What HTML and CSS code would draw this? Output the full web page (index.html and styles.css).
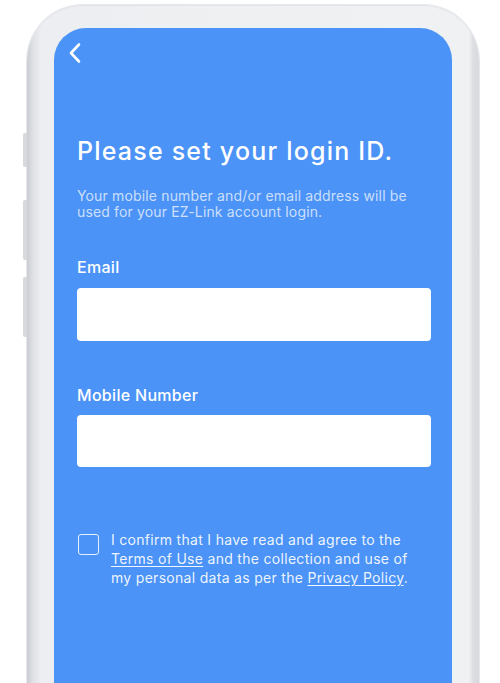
FILE: index.html
```html
<!DOCTYPE html>
<html lang="en">
<head>
<meta charset="utf-8">
<title>Set login ID</title>
<link rel="stylesheet" href="styles.css">
</head>
<body>
<div class="stage">
  <div class="phone">
    <span class="side-btn side-btn-1"></span>
    <span class="side-btn side-btn-2"></span>
    <span class="side-btn side-btn-3"></span>
    <div class="screen">
      <div class="topbar">
        <svg class="back" width="14" height="22" viewBox="0 0 14 22" aria-label="Back">
          <path d="M11 2.5 L3 11 L11 19.5" fill="none" stroke="#fff" stroke-width="2.6" stroke-linecap="round" stroke-linejoin="round"/>
        </svg>
      </div>
      <h1 class="title">Please set your login ID.</h1>
      <p class="subtitle">Your mobile number and/or email address will be used for your EZ-Link account login.</p>
      <div class="field">
        <label class="label">Email</label>
        <div class="input"></div>
      </div>
      <div class="field field-mobile">
        <label class="label">Mobile Number</label>
        <div class="input"></div>
      </div>
      <div class="consent">
        <span class="checkbox"></span>
        <p class="consent-text">I confirm that I have read and agree to the <span class="link">Terms of Use</span> and the collection and use of my personal data as per the <span class="link">Privacy Policy</span>.</p>
      </div>
    </div>
  </div>
</div>
</body>
</html>
```
FILE: styles.css
```css
html, body {
  margin: 0;
  padding: 0;
  background: #ffffff;
  height: 100%;
  overflow: hidden;
}
body {
  font-family: "Inter", "Liberation Sans", sans-serif;
}
.stage {
  padding: 5px 0 0 27px;
}
.phone {
  position: relative;
  width: 452px;
  height: 760px;
  box-sizing: border-box;
  padding: 23px 27px 0 27px;
  border-radius: 56px 56px 0 0;
  background: linear-gradient(to right, #c9ccd2 0px, #dfe1e5 6px, #eceef1 14px, #eef0f2 50%, #f0f1f3 calc(100% - 10px), #dcdee1 calc(100% - 6px), #d8dadd 100%);
  box-shadow: inset 0 1px 0 #e2e4e7, 0 0 0 1px #e6e8eb;
}
.side-btn {
  position: absolute;
  left: -4px;
  width: 4px;
  background: #d7d9dd;
  border-radius: 2px 0 0 2px;
}
.side-btn-1 { top: 128px; height: 34px; }
.side-btn-2 { top: 195px; height: 60px; }
.side-btn-3 { top: 272px; height: 60px; }
.screen {
  height: 100%;
  box-sizing: border-box;
  background: #4b93f6;
  border-radius: 32px 32px 0 0;
  padding: 0 21px 0 23px;
  color: #ffffff;
}
.topbar {
  display: flex;
  padding-top: 14px;
  margin-left: -9px;
  height: 22px;
}
.back {
  display: block;
}
.title {
  margin: 72px 0 0 0;
  font-size: 25px;
  line-height: 30px;
  font-weight: 500;
  letter-spacing: 1.2px;
  white-space: nowrap;
}
.subtitle {
  margin: 22px 0 0 0;
  width: 340px;
  font-size: 14px;
  line-height: 16px;
  letter-spacing: 0.15px;
  color: rgba(255, 255, 255, 0.72);
}
.field {
  margin-top: 37px;
  display: flex;
  flex-direction: column;
}
.field-mobile {
  margin-top: 44px;
}
.label {
  font-size: 16px;
  line-height: 20px;
  font-weight: 500;
  letter-spacing: 0.3px;
}
.input {
  margin-top: 11px;
  height: 53px;
  background: #ffffff;
  border-radius: 4px;
}
.field-mobile .input {
  margin-top: 10px;
  height: 52px;
}
.consent {
  margin-top: 63px;
  display: flex;
  gap: 12px;
  align-items: flex-start;
}
.checkbox {
  flex: none;
  width: 19px;
  height: 19px;
  margin-top: 4px;
  margin-left: 1px;
  border: 1.5px solid rgba(255, 255, 255, 0.85);
  border-radius: 3px;
}
.consent-text {
  margin: 0;
  width: 304px;
  font-size: 14px;
  line-height: 19px;
  letter-spacing: 0.3px;
  color: rgba(255, 255, 255, 0.92);
}
.link {
  text-decoration: underline;
  text-underline-offset: 2px;
}
```
